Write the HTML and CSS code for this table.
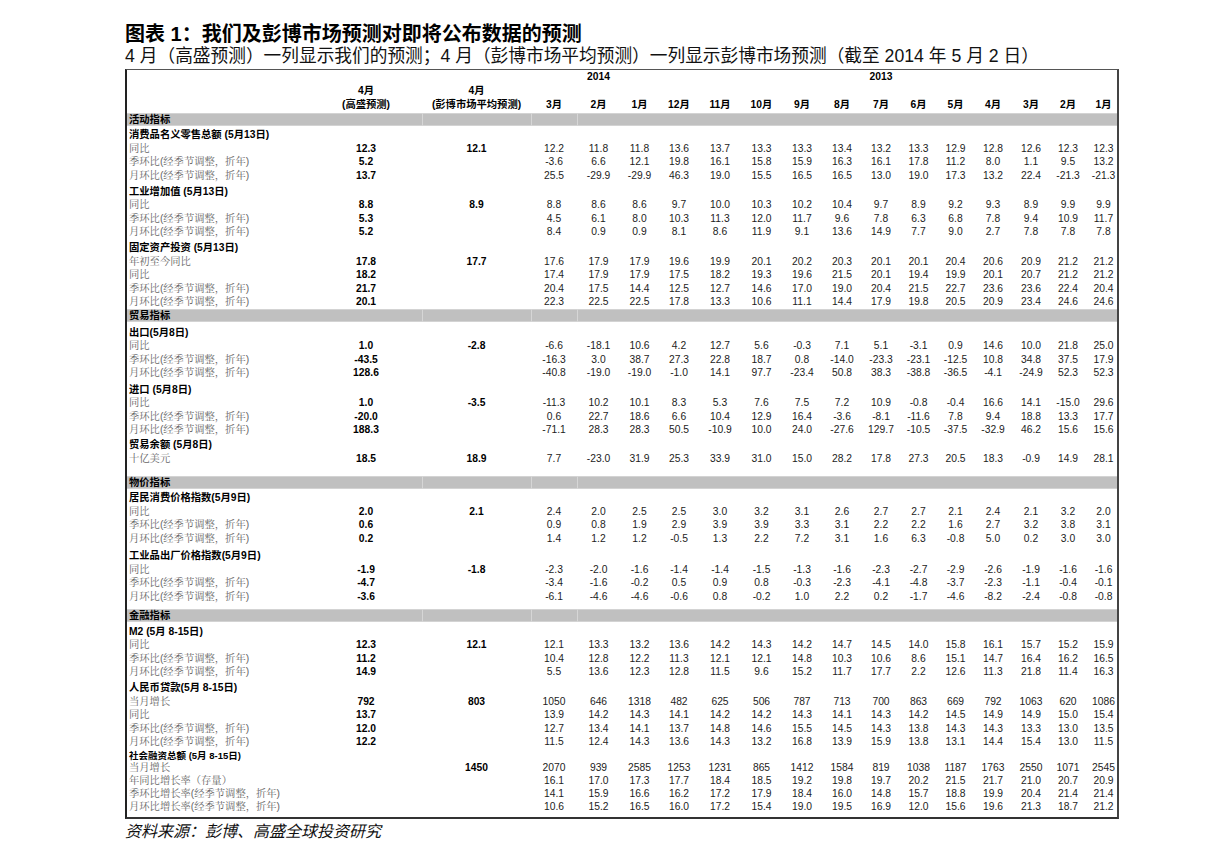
FILE: index.html
```html
<!DOCTYPE html>
<html lang="zh-CN">
<head>
<meta charset="utf-8">
<title>图表 1</title>
<link rel="stylesheet" href="styles.css">
</head>
<body>
<div class="page">
  <div class="title">图表 1：我们及彭博市场预测对即将公布数据的预测</div>
  <div class="subtitle">4 月（高盛预测）一列显示我们的预测；4 月（彭博市场平均预测）一列显示彭博市场预测（截至 2014 年 5 月 2 日）</div>
  <div class="frame">
    <div class="row hd1"><span class="b c5">2014</span><span class="b c12">2013</span></div>
    <div class="row hd2"><span class="b c2">4月</span><span class="b c3">4月</span></div>
    <div class="row hd3"><span></span><span class="b">(高盛预测)</span><span class="b">(彭博市场平均预测)</span><span class="b">3月</span><span class="b">2月</span><span class="b">1月</span><span class="b">12月</span><span class="b">11月</span><span class="b">10月</span><span class="b">9月</span><span class="b">8月</span><span class="b">7月</span><span class="b">6月</span><span class="b">5月</span><span class="b">4月</span><span class="b">3月</span><span class="b">2月</span><span class="b">1月</span></div>

    <div class="row band b1"><span class="lab">活动指标</span><span></span><span class="sep"></span><span class="sep"></span><span class="sep"></span></div>
    <div class="row t"><span class="lab grp">消费品名义零售总额 (5月13日)</span></div>
    <div class="row s"><span class="lab g">同比</span><span class="b">12.3</span><span class="b">12.1</span><span>12.2</span><span>11.8</span><span>11.8</span><span>13.6</span><span>13.7</span><span>13.3</span><span>13.3</span><span>13.4</span><span>13.2</span><span>13.3</span><span>12.9</span><span>12.8</span><span>12.6</span><span>12.3</span><span>12.3</span></div>
    <div class="row s"><span class="lab g">季环比(经季节调整，折年)</span><span class="b">5.2</span><span></span><span>-3.6</span><span>6.6</span><span>12.1</span><span>19.8</span><span>16.1</span><span>15.8</span><span>15.9</span><span>16.3</span><span>16.1</span><span>17.8</span><span>11.2</span><span>8.0</span><span>1.1</span><span>9.5</span><span>13.2</span></div>
    <div class="row s"><span class="lab g">月环比(经季节调整，折年)</span><span class="b">13.7</span><span></span><span>25.5</span><span>-29.9</span><span>-29.9</span><span>46.3</span><span>19.0</span><span>15.5</span><span>16.5</span><span>16.5</span><span>13.0</span><span>19.0</span><span>17.3</span><span>13.2</span><span>22.4</span><span>-21.3</span><span>-21.3</span></div>
    <div class="row t"><span class="lab grp">工业增加值 (5月13日)</span></div>
    <div class="row s"><span class="lab g">同比</span><span class="b">8.8</span><span class="b">8.9</span><span>8.8</span><span>8.6</span><span>8.6</span><span>9.7</span><span>10.0</span><span>10.3</span><span>10.2</span><span>10.4</span><span>9.7</span><span>8.9</span><span>9.2</span><span>9.3</span><span>8.9</span><span>9.9</span><span>9.9</span></div>
    <div class="row s"><span class="lab g">季环比(经季节调整，折年)</span><span class="b">5.3</span><span></span><span>4.5</span><span>6.1</span><span>8.0</span><span>10.3</span><span>11.3</span><span>12.0</span><span>11.7</span><span>9.6</span><span>7.8</span><span>6.3</span><span>6.8</span><span>7.8</span><span>9.4</span><span>10.9</span><span>11.7</span></div>
    <div class="row s"><span class="lab g">月环比(经季节调整，折年)</span><span class="b">5.2</span><span></span><span>8.4</span><span>0.9</span><span>0.9</span><span>8.1</span><span>8.6</span><span>11.9</span><span>9.1</span><span>13.6</span><span>14.9</span><span>7.7</span><span>9.0</span><span>2.7</span><span>7.8</span><span>7.8</span><span>7.8</span></div>
    <div class="row t"><span class="lab grp">固定资产投资 (5月13日)</span></div>
    <div class="row s"><span class="lab g">年初至今同比</span><span class="b">17.8</span><span class="b">17.7</span><span>17.6</span><span>17.9</span><span>17.9</span><span>19.6</span><span>19.9</span><span>20.1</span><span>20.2</span><span>20.3</span><span>20.1</span><span>20.1</span><span>20.4</span><span>20.6</span><span>20.9</span><span>21.2</span><span>21.2</span></div>
    <div class="row s"><span class="lab g">同比</span><span class="b">18.2</span><span></span><span>17.4</span><span>17.9</span><span>17.9</span><span>17.5</span><span>18.2</span><span>19.3</span><span>19.6</span><span>21.5</span><span>20.1</span><span>19.4</span><span>19.9</span><span>20.1</span><span>20.7</span><span>21.2</span><span>21.2</span></div>
    <div class="row s"><span class="lab g">季环比(经季节调整，折年)</span><span class="b">21.7</span><span></span><span>20.4</span><span>17.5</span><span>14.4</span><span>12.5</span><span>12.7</span><span>14.6</span><span>17.0</span><span>19.0</span><span>20.4</span><span>21.5</span><span>22.7</span><span>23.6</span><span>23.6</span><span>22.4</span><span>20.4</span></div>
    <div class="row s"><span class="lab g">月环比(经季节调整，折年)</span><span class="b">20.1</span><span></span><span>22.3</span><span>22.5</span><span>22.5</span><span>17.8</span><span>13.3</span><span>10.6</span><span>11.1</span><span>14.4</span><span>17.9</span><span>19.8</span><span>20.5</span><span>20.9</span><span>23.4</span><span>24.6</span><span>24.6</span></div>

    <div class="row band"><span class="lab">贸易指标</span><span></span><span class="sep"></span><span class="sep"></span><span class="sep"></span></div>
    <div class="row t tall"><span class="lab grp">出口(5月8日)</span></div>
    <div class="row s"><span class="lab g">同比</span><span class="b">1.0</span><span class="b">-2.8</span><span>-6.6</span><span>-18.1</span><span>10.6</span><span>4.2</span><span>12.7</span><span>5.6</span><span>-0.3</span><span>7.1</span><span>5.1</span><span>-3.1</span><span>0.9</span><span>14.6</span><span>10.0</span><span>21.8</span><span>25.0</span></div>
    <div class="row s"><span class="lab g">季环比(经季节调整，折年)</span><span class="b">-43.5</span><span></span><span>-16.3</span><span>3.0</span><span>38.7</span><span>27.3</span><span>22.8</span><span>18.7</span><span>0.8</span><span>-14.0</span><span>-23.3</span><span>-23.1</span><span>-12.5</span><span>10.8</span><span>34.8</span><span>37.5</span><span>17.9</span></div>
    <div class="row s"><span class="lab g">月环比(经季节调整，折年)</span><span class="b">128.6</span><span></span><span>-40.8</span><span>-19.0</span><span>-19.0</span><span>-1.0</span><span>14.1</span><span>97.7</span><span>-23.4</span><span>50.8</span><span>38.3</span><span>-38.8</span><span>-36.5</span><span>-4.1</span><span>-24.9</span><span>52.3</span><span>52.3</span></div>
    <div class="row t mid"><span class="lab grp">进口 (5月8日)</span></div>
    <div class="row s"><span class="lab g">同比</span><span class="b">1.0</span><span class="b">-3.5</span><span>-11.3</span><span>10.2</span><span>10.1</span><span>8.3</span><span>5.3</span><span>7.6</span><span>7.5</span><span>7.2</span><span>10.9</span><span>-0.8</span><span>-0.4</span><span>16.6</span><span>14.1</span><span>-15.0</span><span>29.6</span></div>
    <div class="row s"><span class="lab g">季环比(经季节调整，折年)</span><span class="b">-20.0</span><span></span><span>0.6</span><span>22.7</span><span>18.6</span><span>6.6</span><span>10.4</span><span>12.9</span><span>16.4</span><span>-3.6</span><span>-8.1</span><span>-11.6</span><span>7.8</span><span>9.4</span><span>18.8</span><span>13.3</span><span>17.7</span></div>
    <div class="row s"><span class="lab g">月环比(经季节调整，折年)</span><span class="b">188.3</span><span></span><span>-71.1</span><span>28.3</span><span>28.3</span><span>50.5</span><span>-10.9</span><span>10.0</span><span>24.0</span><span>-27.6</span><span>129.7</span><span>-10.5</span><span>-37.5</span><span>-32.9</span><span>46.2</span><span>15.6</span><span>15.6</span></div>
    <div class="row t short"><span class="lab grp">贸易余额 (5月8日)</span></div>
    <div class="row s"><span class="lab g">十亿美元</span><span class="b">18.5</span><span class="b">18.9</span><span>7.7</span><span>-23.0</span><span>31.9</span><span>25.3</span><span>33.9</span><span>31.0</span><span>15.0</span><span>28.2</span><span>17.8</span><span>27.3</span><span>20.5</span><span>18.3</span><span>-0.9</span><span>14.9</span><span>28.1</span></div>
    <div class="row gap1"></div>

    <div class="row band"><span class="lab">物价指标</span><span></span><span class="sep"></span><span class="sep"></span><span class="sep"></span></div>
    <div class="row t"><span class="lab grp">居民消费价格指数(5月9日)</span></div>
    <div class="row s"><span class="lab g">同比</span><span class="b">2.0</span><span class="b">2.1</span><span>2.4</span><span>2.0</span><span>2.5</span><span>2.5</span><span>3.0</span><span>3.2</span><span>3.1</span><span>2.6</span><span>2.7</span><span>2.7</span><span>2.1</span><span>2.4</span><span>2.1</span><span>3.2</span><span>2.0</span></div>
    <div class="row s"><span class="lab g">季环比(经季节调整，折年)</span><span class="b">0.6</span><span></span><span>0.9</span><span>0.8</span><span>1.9</span><span>2.9</span><span>3.9</span><span>3.9</span><span>3.3</span><span>3.1</span><span>2.2</span><span>2.2</span><span>1.6</span><span>2.7</span><span>3.2</span><span>3.8</span><span>3.1</span></div>
    <div class="row s"><span class="lab g">月环比(经季节调整，折年)</span><span class="b">0.2</span><span></span><span>1.4</span><span>1.2</span><span>1.2</span><span>-0.5</span><span>1.3</span><span>2.2</span><span>7.2</span><span>3.1</span><span>1.6</span><span>6.3</span><span>-0.8</span><span>5.0</span><span>0.2</span><span>3.0</span><span>3.0</span></div>
    <div class="row t tall"><span class="lab grp">工业品出厂价格指数(5月9日)</span></div>
    <div class="row s"><span class="lab g">同比</span><span class="b">-1.9</span><span class="b">-1.8</span><span>-2.3</span><span>-2.0</span><span>-1.6</span><span>-1.4</span><span>-1.4</span><span>-1.5</span><span>-1.3</span><span>-1.6</span><span>-2.3</span><span>-2.7</span><span>-2.9</span><span>-2.6</span><span>-1.9</span><span>-1.6</span><span>-1.6</span></div>
    <div class="row s"><span class="lab g">季环比(经季节调整，折年)</span><span class="b">-4.7</span><span></span><span>-3.4</span><span>-1.6</span><span>-0.2</span><span>0.5</span><span>0.9</span><span>0.8</span><span>-0.3</span><span>-2.3</span><span>-4.1</span><span>-4.8</span><span>-3.7</span><span>-2.3</span><span>-1.1</span><span>-0.4</span><span>-0.1</span></div>
    <div class="row s"><span class="lab g">月环比(经季节调整，折年)</span><span class="b">-3.6</span><span></span><span>-6.1</span><span>-4.6</span><span>-4.6</span><span>-0.6</span><span>0.8</span><span>-0.2</span><span>1.0</span><span>2.2</span><span>0.2</span><span>-1.7</span><span>-4.6</span><span>-8.2</span><span>-2.4</span><span>-0.8</span><span>-0.8</span></div>
    <div class="row gap2"></div>

    <div class="row band"><span class="lab">金融指标</span><span></span><span class="sep"></span><span class="sep"></span><span class="sep"></span></div>
    <div class="row t mid"><span class="lab grp">M2 (5月 8-15日)</span></div>
    <div class="row s"><span class="lab g">同比</span><span class="b">12.3</span><span class="b">12.1</span><span>12.1</span><span>13.3</span><span>13.2</span><span>13.6</span><span>14.2</span><span>14.3</span><span>14.2</span><span>14.7</span><span>14.5</span><span>14.0</span><span>15.8</span><span>16.1</span><span>15.7</span><span>15.2</span><span>15.9</span></div>
    <div class="row s"><span class="lab g">季环比(经季节调整，折年)</span><span class="b">11.2</span><span></span><span>10.4</span><span>12.8</span><span>12.2</span><span>11.3</span><span>12.1</span><span>12.1</span><span>14.8</span><span>10.3</span><span>10.6</span><span>8.6</span><span>15.1</span><span>14.7</span><span>16.4</span><span>16.2</span><span>16.5</span></div>
    <div class="row s"><span class="lab g">月环比(经季节调整，折年)</span><span class="b">14.9</span><span></span><span>5.5</span><span>13.6</span><span>12.3</span><span>12.8</span><span>11.5</span><span>9.6</span><span>15.2</span><span>11.7</span><span>17.7</span><span>2.2</span><span>12.6</span><span>11.3</span><span>21.8</span><span>11.4</span><span>16.3</span></div>
    <div class="row t"><span class="lab grp">人民币贷款(5月 8-15日)</span></div>
    <div class="row s"><span class="lab g">当月增长</span><span class="b">792</span><span class="b">803</span><span>1050</span><span>646</span><span>1318</span><span>482</span><span>625</span><span>506</span><span>787</span><span>713</span><span>700</span><span>863</span><span>669</span><span>792</span><span>1063</span><span>620</span><span>1086</span></div>
    <div class="row s"><span class="lab g">同比</span><span class="b">13.7</span><span></span><span>13.9</span><span>14.2</span><span>14.3</span><span>14.1</span><span>14.2</span><span>14.2</span><span>14.3</span><span>14.1</span><span>14.3</span><span>14.2</span><span>14.5</span><span>14.9</span><span>14.9</span><span>15.0</span><span>15.4</span></div>
    <div class="row s"><span class="lab g">季环比(经季节调整，折年)</span><span class="b">12.0</span><span></span><span>12.7</span><span>13.4</span><span>14.1</span><span>13.7</span><span>14.8</span><span>14.6</span><span>15.5</span><span>14.5</span><span>14.3</span><span>13.8</span><span>14.3</span><span>14.3</span><span>13.3</span><span>13.0</span><span>13.5</span></div>
    <div class="row s"><span class="lab g">月环比(经季节调整，折年)</span><span class="b">12.2</span><span></span><span>11.5</span><span>12.4</span><span>14.3</span><span>13.6</span><span>14.3</span><span>13.2</span><span>16.8</span><span>13.9</span><span>15.9</span><span>13.8</span><span>13.1</span><span>14.4</span><span>15.4</span><span>13.0</span><span>11.5</span></div>
    <div class="row tsm"><span class="lab grp">社会融资总额 (5月 8-15日)</span></div>
    <div class="row s2"><span class="lab g">当月增长</span><span></span><span class="b">1450</span><span>2070</span><span>939</span><span>2585</span><span>1253</span><span>1231</span><span>865</span><span>1412</span><span>1584</span><span>819</span><span>1038</span><span>1187</span><span>1763</span><span>2550</span><span>1071</span><span>2545</span></div>
    <div class="row s2"><span class="lab g">年同比增长率（存量）</span><span></span><span></span><span>16.1</span><span>17.0</span><span>17.3</span><span>17.7</span><span>18.4</span><span>18.5</span><span>19.2</span><span>19.8</span><span>19.7</span><span>20.2</span><span>21.5</span><span>21.7</span><span>21.0</span><span>20.7</span><span>20.9</span></div>
    <div class="row s2"><span class="lab g">季环比增长率(经季节调整，折年)</span><span></span><span></span><span>14.1</span><span>15.9</span><span>16.6</span><span>16.2</span><span>17.2</span><span>17.9</span><span>18.4</span><span>16.0</span><span>14.8</span><span>15.7</span><span>18.8</span><span>19.9</span><span>20.4</span><span>21.4</span><span>21.4</span></div>
    <div class="row s2"><span class="lab g">月环比增长率(经季节调整，折年)</span><span></span><span></span><span>10.6</span><span>15.2</span><span>16.5</span><span>16.0</span><span>17.2</span><span>15.4</span><span>19.0</span><span>19.5</span><span>16.9</span><span>12.0</span><span>15.6</span><span>19.6</span><span>21.3</span><span>18.7</span><span>21.2</span></div>
    <div class="row gap3"></div>
  </div>
  <div class="source">资料来源：彭博、高盛全球投资研究</div>
</div>
</body>
</html>
```

FILE: styles.css
```css
html, body {
  margin: 0;
  padding: 0;
  background: #ffffff;
}

.page {
  padding: 21.7px 0 0 125px;
  font-family: "Liberation Sans", "Noto Sans CJK SC", sans-serif;
  color: #111;
}

.title {
  font-size: 20px;
  line-height: 24px;
  font-weight: bold;
  color: #000;
  white-space: nowrap;
}

.subtitle {
  font-size: 17.7px;
  line-height: 20px;
  white-space: nowrap;
  color: #111;
}

.frame {
  width: 990px;
  margin-top: 3.4px;
  border-top: 1px solid #555;
  border-left: 2px solid #222;
  border-right: 2px solid #444;
  border-bottom: 2px solid #333;
}

.row {
  display: grid;
  grid-template-columns: 183px 112px 109px 46px 43px 39px 40px 42px 41px 40px 40px 38px 37px 37px 38px 38px 36px 31px;
  font-size: 10.3px;
  line-height: 12px;
  align-items: center;
  white-space: nowrap;
  color: #1c1c1c;
  box-sizing: border-box;
}

.row > span {
  text-align: center;
  box-sizing: border-box;
}

.row > span:nth-child(18) {
  padding-left: 4px;
}

.row > .lab {
  text-align: left;
  padding-left: 2px;
}

.b {
  font-weight: bold;
  color: #000;
}

.c2 { grid-column: 2; }
.c3 { grid-column: 3; }
.c5 { grid-column: 5; }
.c12 { grid-column: 12; }

.hd1 { height: 14px; }
.hd2 { height: 14px; }
.hd3 { height: 14.5px; }

.band {
  height: 13px;
  background: #c0c0c0;
  align-items: stretch;
  box-shadow: inset 0 1px 0 #d3d3d3, inset 0 -1px 0 #d3d3d3;
}
.band.b1 { height: 13.5px; }
.band > .lab {
  line-height: 13px;
  font-weight: bold;
  color: #000;
}
.band > .sep {
  border-left: 1px solid #d6d6d6;
}

.t {
  height: 16px;
  align-items: end;
  padding-bottom: 1px;
}
.t.tall { height: 17.5px; }
.t.mid { height: 16.5px; }
.t.short { height: 15px; }

.grp {
  font-weight: bold;
  color: #000;
}

.tsm {
  height: 12px;
  align-items: end;
  font-size: 9.5px;
  line-height: 11px;
}

.s { height: 13.5px; }
.s2 { height: 13px; }

.g {
  color: #666;
  font-family: "Liberation Sans", "Noto Serif CJK SC", "Noto Sans CJK SC", sans-serif;
}

.gap1 { height: 10.5px; }
.gap2 { height: 5.5px; }
.gap3 { height: 4px; }

.source {
  margin-top: 2.6px;
  font-size: 16px;
  line-height: 20px;
  font-style: italic;
  color: #111;
  white-space: nowrap;
}
```
